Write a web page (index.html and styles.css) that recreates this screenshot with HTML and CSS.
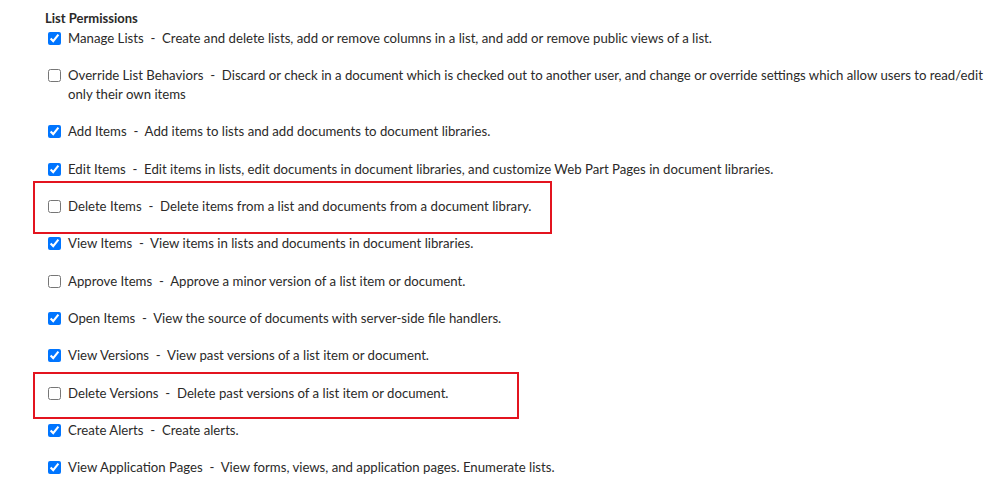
FILE: index.html
```html
<!DOCTYPE html>
<html lang="en">
<head>
  <meta charset="UTF-8" />
  <title>List Permissions</title>
  <link rel="stylesheet" href="styles.css">
</head>
<body>

  <div class="perm-group">
    <h3 class="group-title">List Permissions</h3>

    <label class="perm"><input type="checkbox" checked><span>Manage Lists&nbsp; - &nbsp;Create and delete lists, add or remove columns in a list, and add or remove public views of a list.</span></label>
    <label class="perm"><input type="checkbox"><span>Override List Behaviors&nbsp; - &nbsp;Discard or check in a document which is checked out to another user, and change or override settings which allow users to read/edit only their own items</span></label>
    <label class="perm"><input type="checkbox" checked><span>Add Items&nbsp; - &nbsp;Add items to lists and add documents to document libraries.</span></label>
    <label class="perm"><input type="checkbox" checked><span>Edit Items&nbsp; - &nbsp;Edit items in lists, edit documents in document libraries, and customize Web Part Pages in document libraries.</span></label>
    <label class="perm flagged flag-wide"><input type="checkbox"><span>Delete Items&nbsp; - &nbsp;Delete items from a list and documents from a document library.</span></label>
    <label class="perm"><input type="checkbox" checked><span>View Items&nbsp; - &nbsp;View items in lists and documents in document libraries.</span></label>
    <label class="perm"><input type="checkbox"><span>Approve Items&nbsp; - &nbsp;Approve a minor version of a list item or document.</span></label>
    <label class="perm"><input type="checkbox" checked><span>Open Items&nbsp; - &nbsp;View the source of documents with server-side file handlers.</span></label>
    <label class="perm"><input type="checkbox" checked><span>View Versions&nbsp; - &nbsp;View past versions of a list item or document.</span></label>
    <label class="perm flagged flag-narrow"><input type="checkbox"><span>Delete Versions&nbsp; - &nbsp;Delete past versions of a list item or document.</span></label>
    <label class="perm"><input type="checkbox" checked><span>Create Alerts&nbsp; - &nbsp;Create alerts.</span></label>
    <label class="perm"><input type="checkbox" checked><span>View Application Pages&nbsp; - &nbsp;View forms, views, and application pages. Enumerate lists.</span></label>
  </div>

</body>
</html>
```

FILE: styles.css
```css
* {
  margin: 0;
  padding: 0;
  box-sizing: border-box;
}

body {
  background: #fff;
  color: #2b2a29;
  font-family: Lato, "Liberation Sans", Arial, sans-serif;
  font-size: 13.2px;
}

.perm-group {
  width: 990px;
  padding: 10px 0 0 45px;
}

.group-title {
  font-size: 13px;
  font-weight: 700;
  line-height: 17px;
  margin-bottom: 2px;
}

.perm {
  display: flex;
  align-items: flex-start;
  gap: 7px;
  line-height: 18.67px;
  margin-bottom: 18.67px;
  max-width: 940px;
  position: relative;
}

.perm input {
  width: 13px;
  height: 13px;
  margin: 3px 0 0 3px;
  flex-shrink: 0;
  accent-color: #0075ff;
}

.flagged::after {
  content: "";
  position: absolute;
  left: -12px;
  border: 2px solid #e3141f;
}

.flag-wide::after {
  top: -16px;
  width: 515px;
  height: 49px;
}

.flag-narrow::after {
  top: -12px;
  width: 482px;
  height: 43px;
}
```
